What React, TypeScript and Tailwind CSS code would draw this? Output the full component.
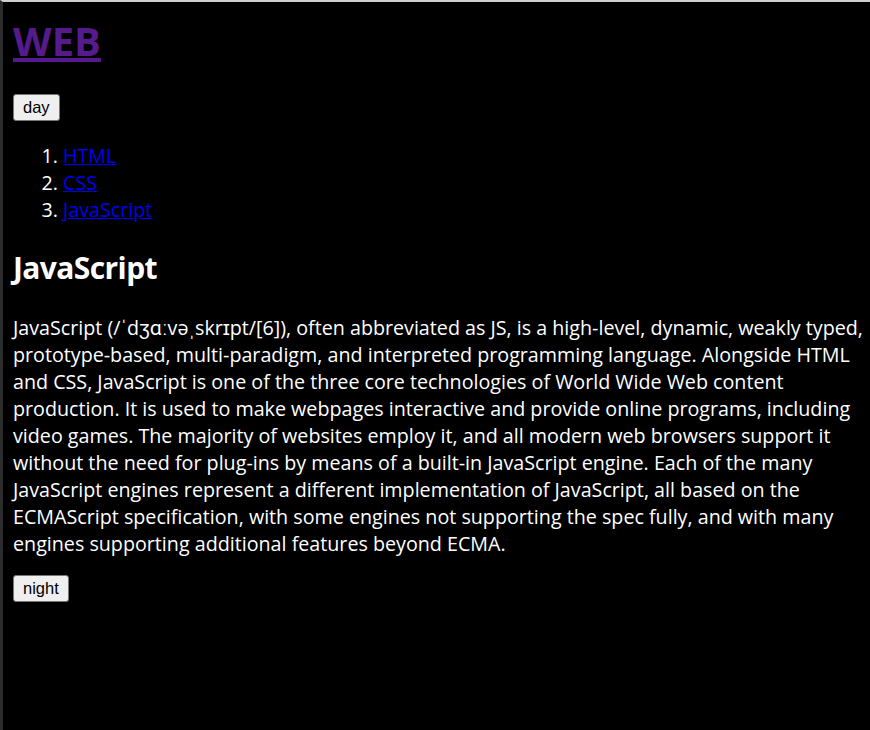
import React from "react";

export default function App() {
  return (
    <div className="min-h-[730px] w-[870px] bg-black border-t-2 border-t-[#d0d0d0] border-l-[3px] border-l-[#2c2c2c] overflow-hidden" style={{ fontFamily: '"Open Sans", "Noto Sans CJK KR", sans-serif' }}>
      <div className="pl-[10px] pr-[3px] text-white text-[19.7px] leading-[27px]">
        <h1 className="mt-[12px] text-[40px] leading-[53px] font-bold">
          <a href="#" className="text-[#551a8b] underline">WEB</a>
        </h1>
        <button className="block mt-[27px] h-[27px] px-[9px] bg-[#efefef] border border-[#767676] rounded-[3px] text-black text-[16.5px] leading-none" style={{ fontFamily: '"Liberation Sans", Arial, sans-serif' }}>
          day
        </button>
        <ol className="mt-[21px] list-decimal pl-[50px]">
          <li><a href="#" className="text-[#0000ee] underline">HTML</a></li>
          <li><a href="#" className="text-[#0000ee] underline">CSS</a></li>
          <li><a href="#" className="text-[#0000ee] underline">JavaScript</a></li>
        </ol>
        <h2 className="mt-[25px] text-[30px] leading-[40px] font-bold tracking-[-0.6px]">JavaScript</h2>
        <p className="mt-[26px]">
          JavaScript (/ˈdʒɑːvəˌskrɪpt/[6]), often abbreviated as JS, is a high-level, dynamic, weakly typed, prototype-based, multi-paradigm, and interpreted programming language. Alongside HTML and CSS, JavaScript is one of the three core technologies of World Wide Web content production. It is used to make webpages interactive and provide online programs, including video games. The majority of websites employ it, and all modern web browsers support it without the need for plug-ins by means of a built-in JavaScript engine. Each of the many JavaScript engines represent a different implementation of JavaScript, all based on the ECMAScript specification, with some engines not supporting the spec fully, and with many engines supporting additional features beyond ECMA.
        </p>
        <button className="block mt-[18px] h-[27px] px-[9px] bg-[#efefef] border border-[#767676] rounded-[3px] text-black text-[16.5px] leading-none" style={{ fontFamily: '"Liberation Sans", Arial, sans-serif' }}>
          night
        </button>
      </div>
    </div>
  );
}
